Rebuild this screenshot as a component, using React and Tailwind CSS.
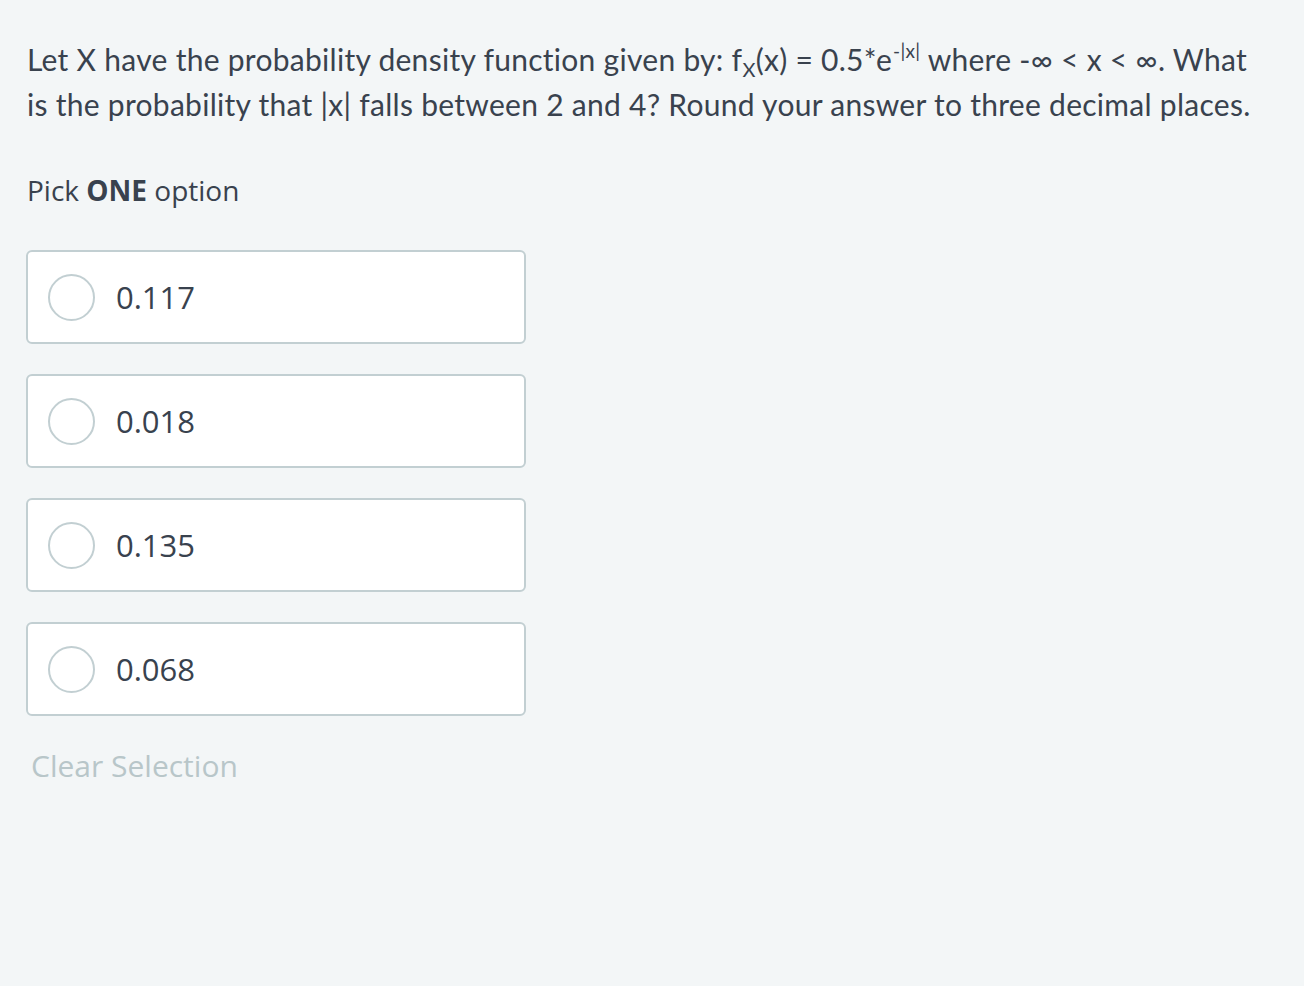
const OPTIONS = ['0.117', '0.018', '0.135', '0.068'];

function Option({ label }) {
  return (
    <label className="flex items-center w-[500px] h-[94px] -ml-[1px] bg-white border-2 border-[#c2cfd2] rounded-[6px] pl-[20px] cursor-pointer">
      <span className="w-[47px] h-[47px] rounded-full border-2 border-[#c2cfd2] bg-white shrink-0" />
      <span className="ml-[21px] text-[31px] leading-none text-[#39424e] font-['Open_Sans',sans-serif]">{label}</span>
    </label>
  );
}

export default function App() {
  return (
    <div className="min-h-[986px] bg-[#f3f6f7] px-[27px] pt-[37px] text-[#39424e]">
      <p className="font-['Lato',sans-serif] text-[30px] leading-[45px] tracking-[0.28px]">
        Let X have the probability density function given by: f<span className="text-[20px] leading-none align-[-6px]">X</span>(x) = 0.5*e
        <span className="text-[19px] leading-none align-[13px] ml-[1px]">-|x|</span> where -∞ &lt; x &lt; ∞. What
        <br />
        is the probability that |x| falls between 2 and 4? Round your answer to three decimal places.
      </p>
      <p className="mt-[43px] font-['Open_Sans',sans-serif] text-[28px] leading-[40px]">
        Pick <span className="font-bold">ONE</span> option
      </p>
      <div className="mt-[40px] flex flex-col gap-[30px]">
        {OPTIONS.map(o => <Option key={o} label={o} />)}
      </div>
      <button className="mt-[30px] ml-[4px] font-['Open_Sans',sans-serif] text-[30px] leading-[40px] text-[#b8c6c9]">Clear Selection</button>
    </div>
  );
}
